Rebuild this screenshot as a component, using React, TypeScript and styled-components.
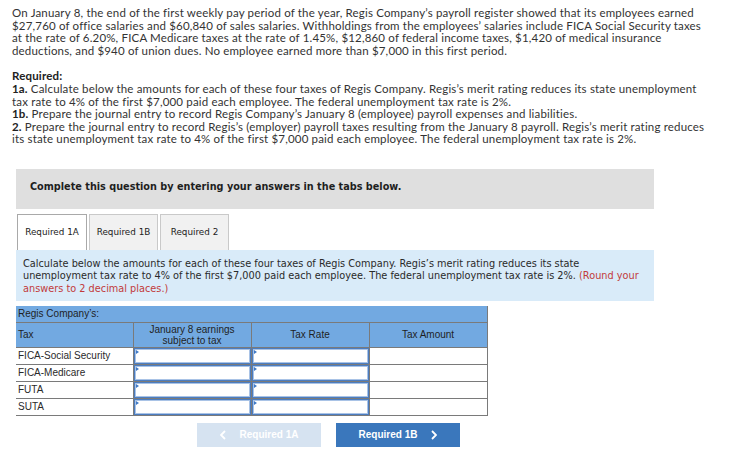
import React from 'react';
import styled, { createGlobalStyle } from 'styled-components';

const GlobalStyle = createGlobalStyle`
  html, body {
    margin: 0;
    padding: 0;
    background: #fff;
  }
  body {
    font-family: Lato, "Open Sans", sans-serif;
    color: #333;
  }
`;

const rows = ['FICA-Social Security', 'FICA-Medicare', 'FUTA', 'SUTA'];

const Chevron = ({ dir }: { dir: 'left' | 'right' }) => (
  <svg width="6" height="10" viewBox="0 0 6 10">
    <polyline
      points={dir === 'left' ? '5,1 1,5 5,9' : '1,1 5,5 1,9'}
      fill="none"
      stroke="#fff"
      strokeWidth="1.8"
    />
  </svg>
);

const App = () => (
  <Root>
    <GlobalStyle />
    <Intro>
      On January 8, the end of the first weekly pay period of the year, Regis Company’s payroll register showed that its employees earned
      <br />
      $27,760 of office salaries and $60,840 of sales salaries. Withholdings from the employees’ salaries include FICA Social Security taxes
      <br />
      at the rate of 6.20%, FICA Medicare taxes at the rate of 1.45%, $12,860 of federal income taxes, $1,420 of medical insurance
      <br />
      deductions, and $940 of union dues. No employee earned more than $7,000 in this first period.
    </Intro>
    <Intro>
      <b>Required:</b>
      <br />
      <b>1a.</b> Calculate below the amounts for each of these four taxes of Regis Company. Regis’s merit rating reduces its state unemployment
      <br />
      tax rate to 4% of the first $7,000 paid each employee. The federal unemployment tax rate is 2%.
      <br />
      <b>1b.</b> Prepare the journal entry to record Regis Company’s January 8 (employee) payroll expenses and liabilities.
      <br />
      <b>2.</b> Prepare the journal entry to record Regis’s (employer) payroll taxes resulting from the January 8 payroll. Regis’s merit rating reduces
      <br />
      its state unemployment tax rate to 4% of the first $7,000 paid each employee. The federal unemployment tax rate is 2%.
    </Intro>

    <Question>
      <Banner>Complete this question by entering your answers in the tabs below.</Banner>
      <Tabs>
        <Tab active>Required 1A</Tab>
        <Tab>Required 1B</Tab>
        <Tab>Required 2</Tab>
      </Tabs>
      <Info>
        Calculate below the amounts for each of these four taxes of Regis Company. Regis’s merit rating reduces its state
        <br />
        unemployment tax rate to 4% of the first $7,000 paid each employee. The federal unemployment tax rate is 2%.{' '}
        <Hint>
          (Round your
          <br />
          answers to 2 decimal places.)
        </Hint>
      </Info>

      <Table>
        <colgroup>
          <col style={{ width: 117 }} />
          <col style={{ width: 118 }} />
          <col style={{ width: 118 }} />
          <col style={{ width: 118 }} />
        </colgroup>
        <tbody>
          <tr>
            <Caption colSpan={4}>Regis Company’s:</Caption>
          </tr>
          <tr>
            <Head align="left">Tax</Head>
            <Head>
              January 8 earnings
              <br />
              subject to tax
            </Head>
            <Head>Tax Rate</Head>
            <Head>Tax Amount</Head>
          </tr>
          {rows.map((r) => (
            <tr key={r}>
              <Label>{r}</Label>
              <InputCell>
                <Field />
              </InputCell>
              <InputCell>
                <Field />
              </InputCell>
              <Cell />
            </tr>
          ))}
        </tbody>
      </Table>

      <Nav>
        <NavButton disabled>
          <Chevron dir="left" />
          Required 1A
        </NavButton>
        <NavButton>
          Required 1B
          <Chevron dir="right" />
        </NavButton>
      </Nav>
    </Question>
  </Root>
);

const Root = styled.div`
  padding: 7px 12px 0;
`;

const Intro = styled.p`
  margin: 0 0 13px;
  font-size: 11.5px;
  letter-spacing: 0.17px;
  line-height: 12.6px;
  color: #333;
  white-space: nowrap;
  b {
    font-weight: 700;
    color: #222;
  }
`;

const Question = styled.div`
  margin: 23px 0 0 4px;
  width: 638px;
`;

const Banner = styled.div`
  height: 40px;
  box-sizing: border-box;
  padding: 11px 14px 0;
  background: #dfdfdf;
  font-family: "DejaVu Sans", Verdana, sans-serif;
  font-size: 9.7px;
  font-weight: 700;
  line-height: 14px;
  color: #1e1e1e;
`;

const Tabs = styled.div`
  display: flex;
  margin: 5px 0 0 1px;
`;

const Tab = styled.div<{ active?: boolean }>`
  width: ${(p) => (p.active ? 70 : 69)}px;
  height: 36px;
  box-sizing: border-box;
  display: flex;
  align-items: center;
  justify-content: center;
  border: 1px solid ${(p) => (p.active ? '#a9a9a9' : '#c9c9c9')};
  border-bottom: none;
  background: ${(p) => (p.active ? '#fff' : '#f1f1f1')};
  font-family: "DejaVu Sans", Verdana, sans-serif;
  font-size: 8.8px;
  color: #222;
  & + & {
    margin-left: 2px;
  }
`;

const Info = styled.div`
  height: 51px;
  box-sizing: border-box;
  padding: 8px 7px 0;
  background: #d9ebf9;
  font-family: "DejaVu Sans", Verdana, sans-serif;
  font-size: 9.75px;
  line-height: 12.3px;
  color: #2a2a2a;
  white-space: nowrap;
`;

const Hint = styled.span`
  color: #c23b3b;
`;

const Table = styled.table`
  margin-top: 5px;
  width: 471px;
  border-collapse: collapse;
  table-layout: fixed;
  font-family: "Liberation Sans", Arial, sans-serif;
  font-size: 10px;
  color: #2a2a2a;
  td, th {
    padding: 0;
  }
`;

const Caption = styled.td`
  height: 16px;
  background: #72a9e1;
  padding: 0 2px !important;
  border-right: 1px solid #7a7a7a;
  color: #1f1f1f;
`;

const Head = styled.th<{ align?: string }>`
  height: 25px;
  box-sizing: border-box;
  background: #72a9e1;
  font-weight: 400;
  line-height: 11px;
  color: #1f1f1f;
  text-align: ${(p) => p.align || 'center'};
  border: 1px solid #7a7a7a;
  border-left: ${(p) => (p.align === 'left' ? 'none' : '1px solid #7a7a7a')};
  padding: 0 2px !important;
`;

const Label = styled.td`
  height: 16px;
  box-sizing: border-box;
  padding: 0 2px !important;
  border-bottom: 1px solid #7a7a7a;
  border-right: 1px solid #7a7a7a;
  white-space: nowrap;
`;

const InputCell = styled.td`
  height: 16px;
  box-sizing: border-box;
  border: 1px solid #7a7a7a;
  position: relative;
  &::before {
    content: '';
    position: absolute;
    left: 2px;
    top: 2px;
    border-left: 3px solid #3f79c6;
    border-top: 2px solid transparent;
    border-bottom: 2px solid transparent;
  }
`;

const Field = styled.div`
  height: 16px;
  box-sizing: border-box;
  border: 1px solid #4c7dc0;
  box-shadow: inset 0 0 0 1px #a9c3e6;
  background: #fff;
`;

const Cell = styled.td`
  height: 16px;
  box-sizing: border-box;
  border: 1px solid #7a7a7a;
  background: #fff;
`;

const Nav = styled.div`
  display: flex;
  gap: 15px;
  margin-top: 7px;
  padding-left: 181px;
`;

const NavButton = styled.div<{ disabled?: boolean }>`
  width: 124px;
  height: 24px;
  display: flex;
  align-items: center;
  justify-content: center;
  gap: 14px;
  background: ${(p) => (p.disabled ? '#d6e3f1' : '#3a77bc')};
  color: #fff;
  font-family: "Liberation Sans", Arial, sans-serif;
  font-size: 10px;
  font-weight: 700;
`;

export default App;
